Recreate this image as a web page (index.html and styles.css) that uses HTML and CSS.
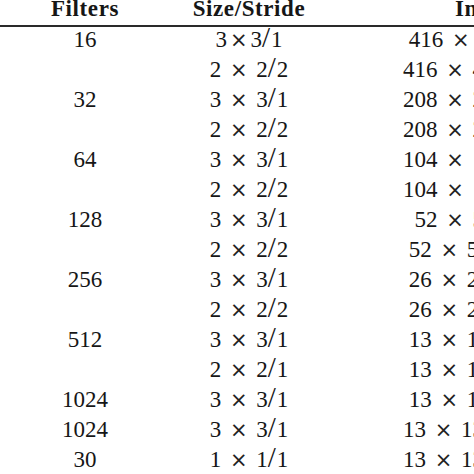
FILE: index.html
```html
<!DOCTYPE html>
<html>
<head>
<meta charset="utf-8">
<link rel="stylesheet" href="styles.css">
</head>
<body>
<div class="table">
  <div class="row head">
    <div class="c">Filters</div>
    <div class="c">Size/Stride</div>
    <div class="c">Input</div>
  </div>
  <div class="rows">
    <div class="row"><div class="c">16</div><div class="c">3<span class="x">×</span>3<span class="s">/</span>1</div><div class="c">416 <span class="x">×</span> 416 <span class="x">×</span> 3</div></div>
    <div class="row"><div class="c"></div><div class="c">2 <span class="x">×</span> 2<span class="s">/</span>2</div><div class="c">416 <span class="x">×</span> 416 <span class="x">×</span> 16</div></div>
    <div class="row"><div class="c">32</div><div class="c">3 <span class="x">×</span> 3<span class="s">/</span>1</div><div class="c">208 <span class="x">×</span> 208 <span class="x">×</span> 16</div></div>
    <div class="row"><div class="c"></div><div class="c">2 <span class="x">×</span> 2<span class="s">/</span>2</div><div class="c">208 <span class="x">×</span> 208 <span class="x">×</span> 32</div></div>
    <div class="row"><div class="c">64</div><div class="c">3 <span class="x">×</span> 3<span class="s">/</span>1</div><div class="c">104 <span class="x">×</span> 104 <span class="x">×</span> 32</div></div>
    <div class="row"><div class="c"></div><div class="c">2 <span class="x">×</span> 2<span class="s">/</span>2</div><div class="c">104 <span class="x">×</span> 104 <span class="x">×</span> 64</div></div>
    <div class="row"><div class="c">128</div><div class="c">3 <span class="x">×</span> 3<span class="s">/</span>1</div><div class="c">52 <span class="x">×</span> 52 <span class="x">×</span> 64</div></div>
    <div class="row"><div class="c"></div><div class="c">2 <span class="x">×</span> 2<span class="s">/</span>2</div><div class="c">52 <span class="x">×</span> 52 <span class="x">×</span> 128</div></div>
    <div class="row"><div class="c">256</div><div class="c">3 <span class="x">×</span> 3<span class="s">/</span>1</div><div class="c">26 <span class="x">×</span> 26 <span class="x">×</span> 128</div></div>
    <div class="row"><div class="c"></div><div class="c">2 <span class="x">×</span> 2<span class="s">/</span>2</div><div class="c">26 <span class="x">×</span> 26 <span class="x">×</span> 256</div></div>
    <div class="row"><div class="c">512</div><div class="c">3 <span class="x">×</span> 3<span class="s">/</span>1</div><div class="c">13 <span class="x">×</span> 13 <span class="x">×</span> 256</div></div>
    <div class="row"><div class="c"></div><div class="c">2 <span class="x">×</span> 2<span class="s">/</span>1</div><div class="c">13 <span class="x">×</span> 13 <span class="x">×</span> 512</div></div>
    <div class="row"><div class="c">1024</div><div class="c">3 <span class="x">×</span> 3<span class="s">/</span>1</div><div class="c">13 <span class="x">×</span> 13 <span class="x">×</span> 512</div></div>
    <div class="row"><div class="c">1024</div><div class="c">3 <span class="x">×</span> 3<span class="s">/</span>1</div><div class="c">13 <span class="x">×</span> 13 <span class="x">×</span> 1024</div></div>
    <div class="row"><div class="c">30</div><div class="c">1 <span class="x">×</span> 1<span class="s">/</span>1</div><div class="c">13 <span class="x">×</span> 13 <span class="x">×</span> 1024</div></div>
  </div>
</div>
</body>
</html>
```

FILE: styles.css
```css
html, body {
  margin: 0;
  padding: 0;
  background: #ffffff;
  overflow: hidden;
}
body {
  width: 474px;
  height: 474px;
  font-family: "Liberation Serif", "Times New Roman", serif;
  font-size: 23px;
  color: #161616;
}
.table {
  width: 640px;
}
.row {
  display: grid;
  grid-template-columns: 170px 158px 312px;
  line-height: 30px;
  height: 30px;
  white-space: nowrap;
}
.c {
  text-align: center;
}
.head {
  font-weight: bold;
  line-height: 18.5px;
  height: 18.5px;
  padding-bottom: 6.5px;
  border-bottom: 2px solid #2a2a2a;
  letter-spacing: 0.6px;
}
.rows {
  margin-top: -2px;
}
.x {
  font-family: "DejaVu Sans", sans-serif;
  font-size: 21px;
  line-height: 0;
  margin: 0 3px;
  color: #222222;
}
.s {
  font-size: 29px;
  line-height: 0;
  margin: 0 1px 0 0;
}
```
